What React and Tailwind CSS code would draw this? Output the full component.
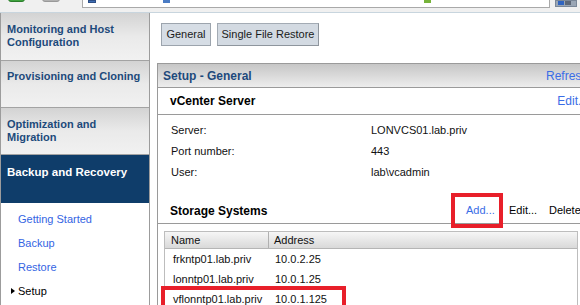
import React from "react";

const navSections = [
  { lines: ["Monitoring and Host", "Configuration"], h: "h-[48px]", pt: "pt-[10px]" },
  { lines: ["Provisioning and Cloning"], h: "h-[47px]", pt: "pt-[9px]" },
  { lines: ["Optimization and", "Migration"], h: "h-[47px]", pt: "pt-[10px]" },
];

const subLinks = ["Getting Started", "Backup", "Restore"];

const details = [
  ["Server:", "LONVCS01.lab.priv"],
  ["Port number:", "443"],
  ["User:", "lab\\vcadmin"],
];

const storage = [
  ["frkntp01.lab.priv", "10.0.2.25"],
  ["lonntp01.lab.priv", "10.0.1.25"],
  ["vflonntp01.lab.priv", "10.0.1.125"],
];

function TopStrip() {
  // browser-ish toolbar, mostly cut off above the crop
  return (
    <div className="h-[13px] bg-[#f0f0f0] border-b border-[#c8d5de] flex items-start overflow-hidden">
      <div className="ml-[8px] -mt-[10px] w-[17px] h-[12px] rounded-[3px] bg-[#3fa33f] border border-[#2c7d2c]" />
      <div className="ml-[17px] -mt-[10px] w-[18px] h-[12px] rounded-[3px] bg-[#b1b1b1] border border-[#999]" />
      <div className="ml-[22px] w-[468px] h-[8px] bg-white border border-t-0 border-[#a9a9a9] flex items-start">
        <div className="ml-[5px] w-[8px] h-[3px] bg-[#3f6fb6] border border-[#2d4f86]" />
        <div className="ml-[67px] w-[7px] h-[3px] bg-[#4a7bc4]" />
        <div className="ml-[254px] w-[7px] h-[3px] bg-[#76b33a]" />
      </div>
      <div className="ml-[5px] w-[22px] h-[7px] bg-[#9aa6b5] border border-[#7a8798] flex items-start">
        <div className="ml-[2px] w-[6px] h-[4px] bg-[#3064c0]" />
        <div className="ml-[1px] w-[6px] h-[4px] bg-[#5d6777]" />
      </div>
    </div>
  );
}

function Sidebar() {
  return (
    <aside className="w-[150px] shrink-0 border-l border-r border-[#9c9c9c] bg-white flex flex-col">
      {navSections.map((s) => (
        <div
          key={s.lines[0]}
          className={`${s.h} ${s.pt} border-b border-[#a3a3a3] bg-linear-to-b from-[#d3d3d3] via-[#eaeaea] to-[#f1f1f1] pl-[6px] text-[11px] leading-[13px] font-bold text-[#1d4a7b]`}
        >
          {s.lines.map((l) => (
            <div key={l}>{l}</div>
          ))}
        </div>
      ))}
      <div className="h-[48px] bg-[#0f3d6a] pl-[6px] pt-[11px] text-[11.5px] leading-[13px] font-bold text-white">
        Backup and Recovery
      </div>
      <div className="pt-[4px] flex flex-col text-[11px]">
        {subLinks.map((l) => (
          <div key={l} className="h-[24px] flex items-center pl-[17px] text-[#3464e3]">
            {l}
          </div>
        ))}
        <div className="h-[24px] flex items-center pl-[10px] text-black">
          <span className="w-0 h-0 border-y-[3px] border-y-transparent border-l-[4px] border-l-black mr-[3px]" />
          Setup
        </div>
      </div>
    </aside>
  );
}

function Panel() {
  return (
    <div className="mt-[17px] w-[440px] border border-[#9a9a9a] bg-white">
      <div className="h-[24px] border-b border-[#9a9a9a] bg-linear-to-b from-[#c6c6c6] to-[#ededed] flex items-center justify-between pl-[5px] pr-[8px]">
        <span className="text-[12px] font-bold text-[#1e4a7c]">Setup - General</span>
        <span className="text-[12px] text-[#3a6de6]">Refresh</span>
      </div>

      <div className="h-[27px] border-b border-[#9a9a9a] flex items-center justify-between pl-[12px] pr-[8px]">
        <span className="text-[12px] font-bold text-black">vCenter Server</span>
        <span className="text-[12px] text-[#3a6de6]">Edit...</span>
      </div>

      <div className="pt-[5px] text-[11px] text-[#111]">
        {details.map(([k, v]) => (
          <div key={k} className="h-[21px] flex items-center pl-[13px]">
            <span className="w-[200px]">{k}</span>
            <span>{v}</span>
          </div>
        ))}
      </div>

      <div className="mt-[15px] h-[26px] border-b border-[#9a9a9a] flex items-center pl-[12px] text-[11px]">
        <span className="w-[296px] text-[12px] font-bold text-black">Storage Systems</span>
        <span className="w-[43px] text-[#3a6de6]">Add...</span>
        <span className="w-[40px] text-black">Edit...</span>
        <span className="text-black">Delete</span>
      </div>

      <div className="mt-[7px] ml-[6px] w-[414px] h-[80px] border border-[#bdbdbd] text-[11px] text-[#111]">
        <div className="h-[17px] flex bg-linear-to-b from-[#f6f6f6] to-[#d9d9d9] border-b border-[#b5b5b5]">
          <div className="w-[104px] border-r border-[#b0b0b0] pl-[6px] flex items-center">Name</div>
          <div className="pl-[5px] flex items-center">Address</div>
        </div>
        {storage.map(([n, a]) => (
          <div key={n} className="h-[20px] flex items-center">
            <span className="w-[105px] pl-[8px]">{n}</span>
            <span className="pl-[5px]">{a}</span>
          </div>
        ))}
      </div>
    </div>
  );
}

export default function App() {
  return (
    <div className="relative w-[580px] h-[305px] overflow-hidden bg-white font-['Liberation_Sans',Arial,sans-serif]">
      <TopStrip />
      <div className="flex h-[292px]">
        <Sidebar />
        <main className="flex-1 pl-[7px] bg-white">
          <div className="mt-[10px] ml-[4px] flex gap-[6px] text-[11px] text-[#1a1a1a]">
            <div className="w-[50px] h-[23px] flex items-center justify-center bg-[#d6dde5] border border-[#9ca4ad]">
              General
            </div>
            <div className="w-[102px] h-[23px] flex items-center justify-center bg-[#d3dae2] border border-[#a3abb4] border-r-[#8e959d] border-b-[#8e959d]">
              Single File Restore
            </div>
          </div>
          <Panel />
        </main>
      </div>

      {/* red highlight boxes */}
      <div className="absolute left-[451px] top-[193px] w-[52px] h-[35px] border-[4px] border-[#e81f2a]" />
      <div className="absolute left-[161px] top-[286px] w-[185px] h-[30px] border-[4px] border-[#e81f2a]" />
    </div>
  );
}
